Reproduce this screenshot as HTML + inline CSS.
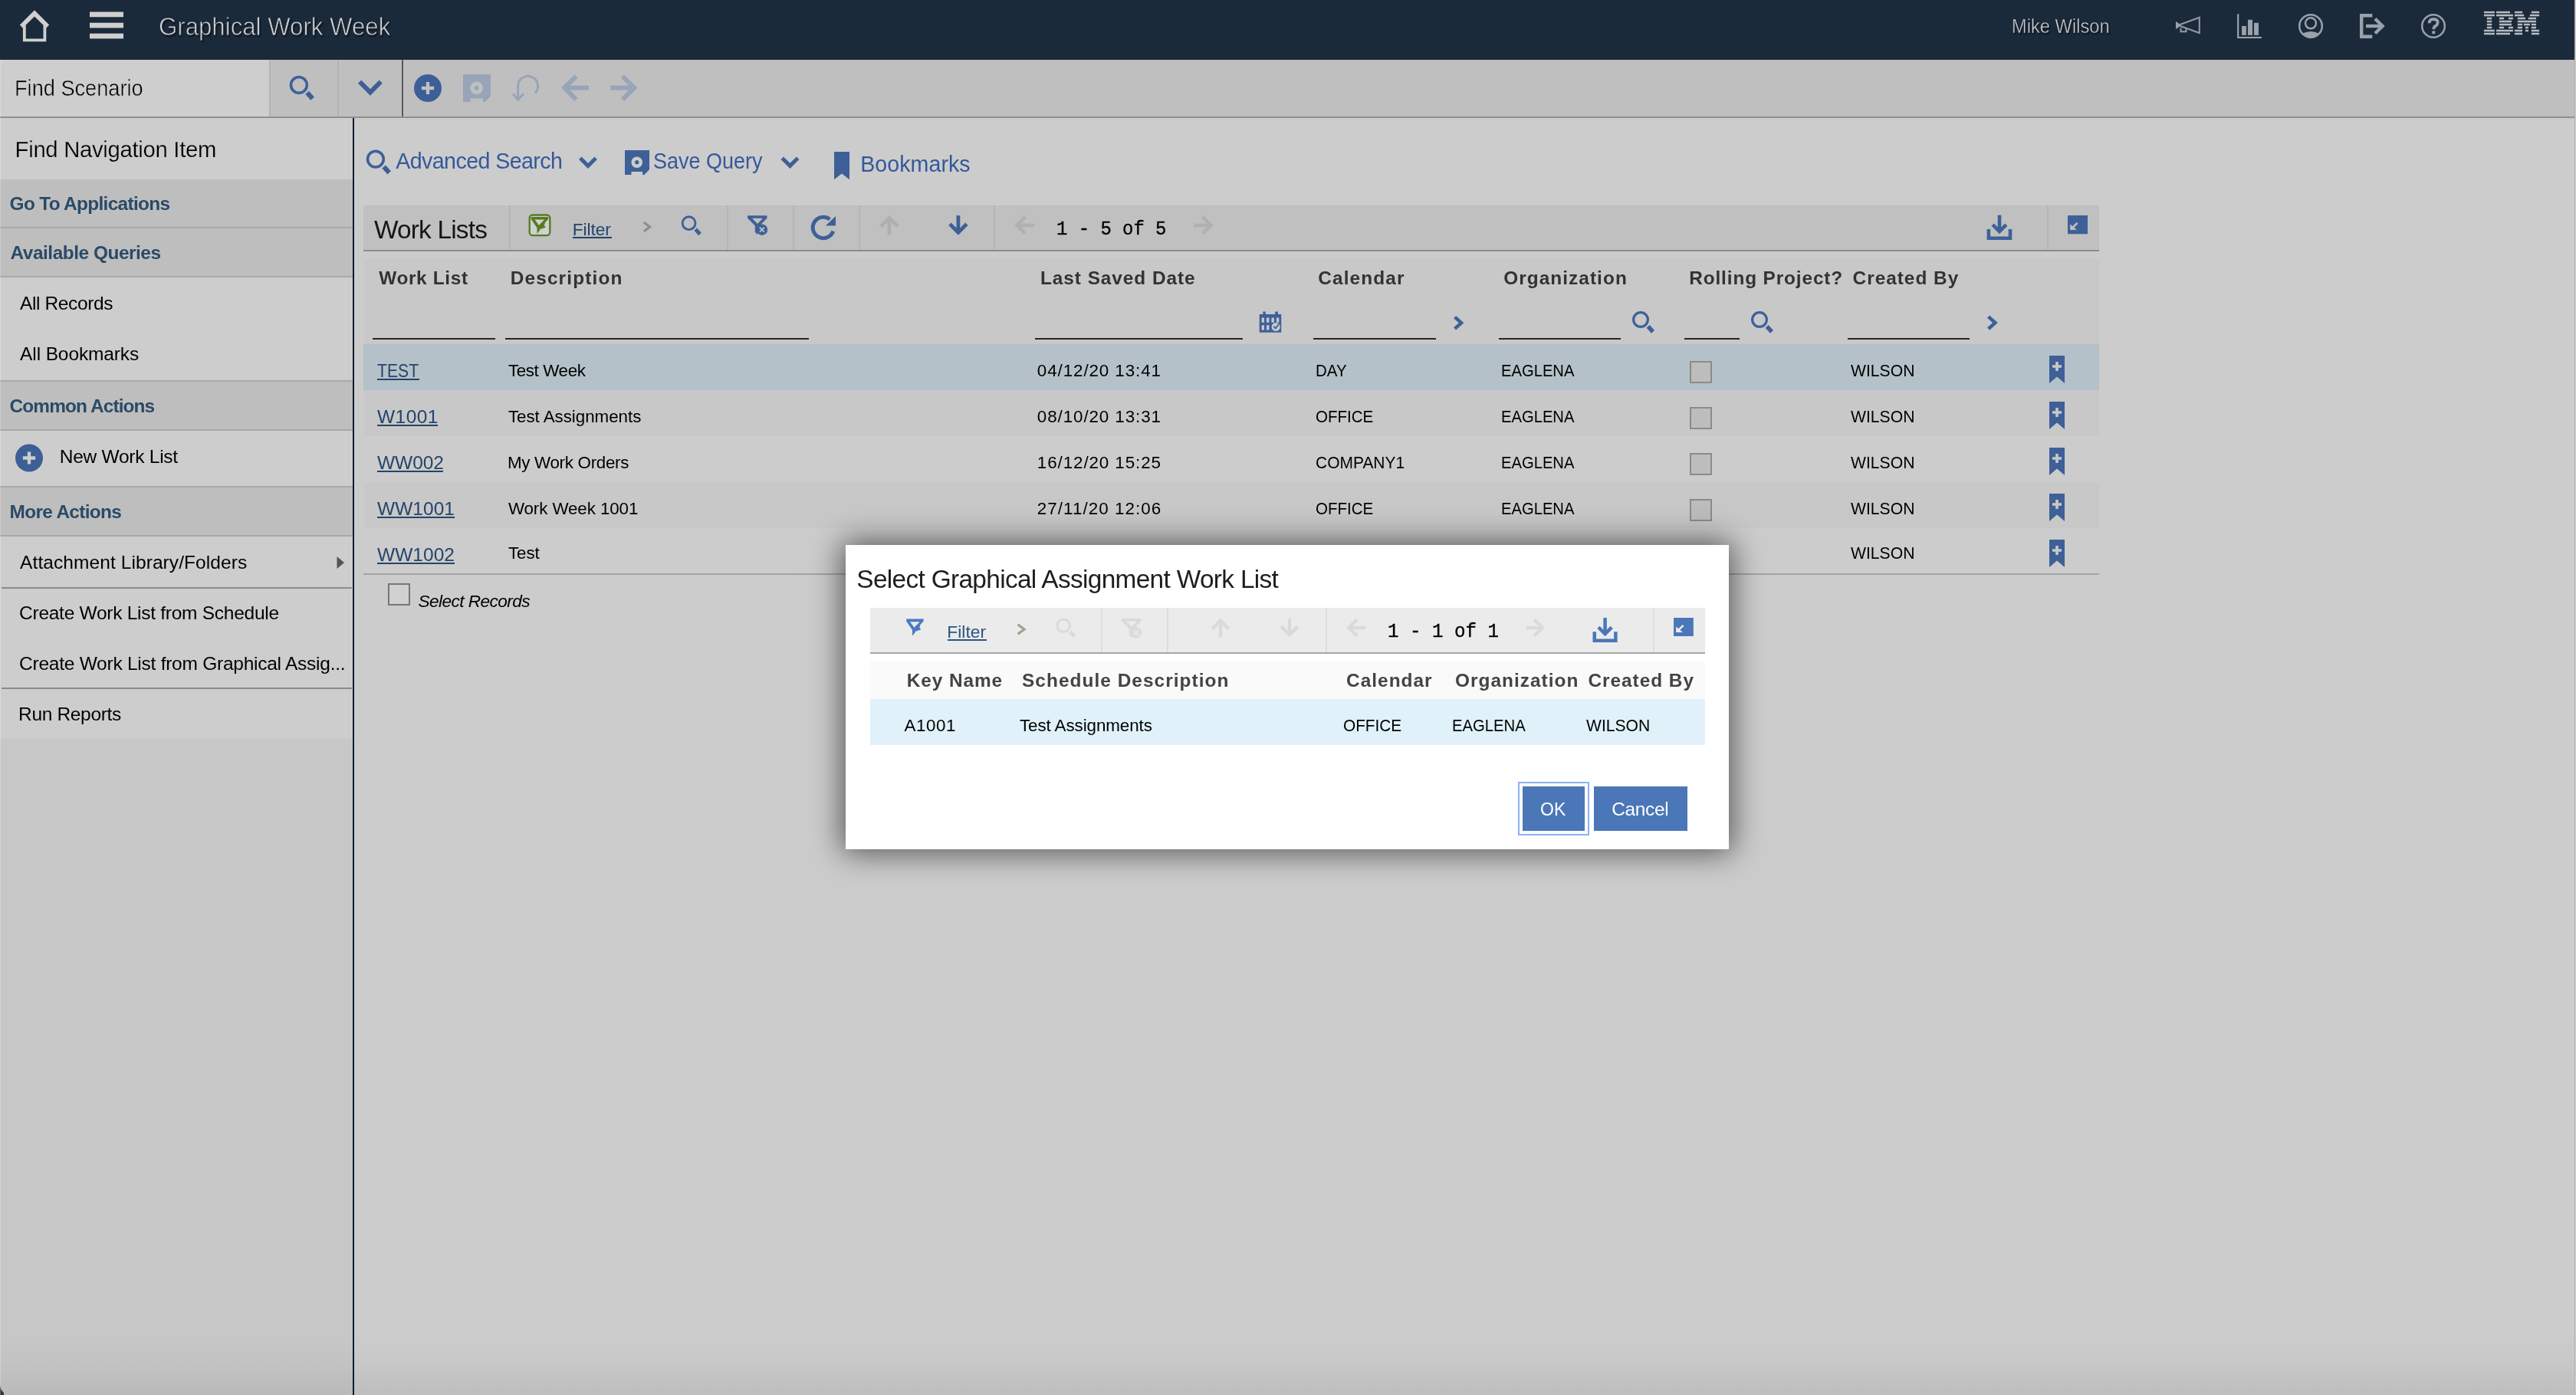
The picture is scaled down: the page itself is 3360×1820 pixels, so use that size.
<!DOCTYPE html>
<html lang="en">
<head>
<meta charset="utf-8">
<title>Graphical Work Week</title>
<style>
html,body{margin:0;padding:0;}
body{width:3360px;height:1820px;overflow:hidden;background:#cccccc;position:relative;font-family:"Liberation Sans",sans-serif;}
.r{position:absolute;}
.tl{position:absolute;left:0;top:0;width:3360px;height:1820px;will-change:transform;}
.t{position:absolute;white-space:nowrap;}
.dz{z-index:20;}
.dz2{z-index:25;}
svg{position:absolute;overflow:visible;}
.i{z-index:12;}
.di{z-index:28;}
</style>
</head>
<body>
<div class="r" style="left:0px;top:0px;width:3360px;height:78px;background:#1b2a3b;"></div>
<div class="r" style="left:0px;top:78px;width:3360px;height:74px;background:#bfbfbf;"></div>
<div class="r" style="left:0px;top:152px;width:3360px;height:2px;background:#8f8f8f;"></div>
<div class="r" style="left:0px;top:78px;width:351px;height:74px;background:#cecece;"></div>
<div class="r" style="left:351px;top:78px;width:2px;height:74px;background:#b3b3b3;"></div>
<div class="r" style="left:440px;top:78px;width:2px;height:74px;background:#b3b3b3;"></div>
<div class="r" style="left:524px;top:78px;width:2px;height:74px;background:#5a5a5a;"></div>
<div class="r" style="left:0px;top:154px;width:460px;height:810px;background:#cdcdcd;"></div>
<div class="r" style="left:0px;top:964px;width:460px;height:856px;background:#c7c7c7;"></div>
<div class="r" style="left:460px;top:154px;width:2px;height:1666px;background:#0f1e30;"></div>
<div class="r" style="left:0px;top:234px;width:460px;height:62px;background:#bebebe;"></div>
<div class="r" style="left:0px;top:298px;width:460px;height:62px;background:#bebebe;"></div>
<div class="r" style="left:0px;top:498px;width:460px;height:62px;background:#bebebe;"></div>
<div class="r" style="left:0px;top:636px;width:460px;height:62px;background:#bebebe;"></div>
<div class="r" style="left:0px;top:296px;width:460px;height:2px;background:#a9a9a9;"></div>
<div class="r" style="left:0px;top:360px;width:460px;height:2px;background:#a9a9a9;"></div>
<div class="r" style="left:0px;top:496px;width:460px;height:2px;background:#a9a9a9;"></div>
<div class="r" style="left:0px;top:560px;width:460px;height:2px;background:#a9a9a9;"></div>
<div class="r" style="left:0px;top:634px;width:460px;height:2px;background:#a9a9a9;"></div>
<div class="r" style="left:0px;top:698px;width:460px;height:2px;background:#a9a9a9;"></div>
<div class="r" style="left:2px;top:766px;width:457px;height:2px;background:#8c8c8c;"></div>
<div class="r" style="left:2px;top:897px;width:457px;height:2px;background:#8c8c8c;"></div>
<div class="r" style="left:474px;top:268px;width:2264px;height:58px;background:#c0c0c0;"></div>
<div class="r" style="left:474px;top:326px;width:2264px;height:2px;background:#8c8c8c;"></div>
<div class="r" style="left:664px;top:268px;width:2px;height:58px;background:#b5b5b5;"></div>
<div class="r" style="left:948px;top:268px;width:2px;height:58px;background:#b5b5b5;"></div>
<div class="r" style="left:1034px;top:268px;width:2px;height:58px;background:#b5b5b5;"></div>
<div class="r" style="left:1120px;top:268px;width:2px;height:58px;background:#b5b5b5;"></div>
<div class="r" style="left:1296px;top:268px;width:2px;height:58px;background:#b5b5b5;"></div>
<div class="r" style="left:2670px;top:268px;width:2px;height:58px;background:#b5b5b5;"></div>
<div class="r" style="left:474px;top:337px;width:2264px;height:112px;background:#c8c8c8;"></div>
<div class="r" style="left:486px;top:441px;width:160px;height:2px;background:#262626;"></div>
<div class="r" style="left:659px;top:441px;width:396px;height:2px;background:#262626;"></div>
<div class="r" style="left:1350px;top:441px;width:271px;height:2px;background:#262626;"></div>
<div class="r" style="left:1713px;top:441px;width:160px;height:2px;background:#262626;"></div>
<div class="r" style="left:1955px;top:441px;width:159px;height:2px;background:#262626;"></div>
<div class="r" style="left:2197px;top:441px;width:72px;height:2px;background:#262626;"></div>
<div class="r" style="left:2410px;top:441px;width:159px;height:2px;background:#262626;"></div>
<div class="r" style="left:474px;top:449px;width:2264px;height:60px;background:#b4c1c8;"></div>
<div class="r" style="left:474px;top:509px;width:2264px;height:60px;background:#c8c8c8;"></div>
<div class="r" style="left:474px;top:629px;width:2264px;height:60px;background:#c8c8c8;"></div>
<div class="r" style="left:474px;top:748px;width:2264px;height:2px;background:#a3a3a3;"></div>
<div class="r" style="left:2204px;top:471px;width:29px;height:29px;background:#bdbdbd;box-sizing:border-box;border:2px solid #8b8b8b;"></div>
<div class="r" style="left:2204px;top:531px;width:29px;height:29px;background:#bdbdbd;box-sizing:border-box;border:2px solid #8b8b8b;"></div>
<div class="r" style="left:2204px;top:591px;width:29px;height:29px;background:#bdbdbd;box-sizing:border-box;border:2px solid #8b8b8b;"></div>
<div class="r" style="left:2204px;top:651px;width:29px;height:29px;background:#bdbdbd;box-sizing:border-box;border:2px solid #8b8b8b;"></div>
<div class="r" style="left:506px;top:761px;width:29px;height:29px;background:#d1d1d1;box-sizing:border-box;border:2px solid #767676;"></div>
<div class="r dz" style="left:1103px;top:711px;width:1152px;height:397px;background:#ffffff;box-shadow:0 0 38px 4px rgba(0,0,0,.6);"></div>
<div class="r dz2" style="left:1135px;top:793px;width:1089px;height:58px;background:#ebebeb;"></div>
<div class="r dz2" style="left:1135px;top:851px;width:1089px;height:2px;background:#a6a6a6;"></div>
<div class="r dz2" style="left:1436px;top:793px;width:2px;height:58px;background:#dddddd;"></div>
<div class="r dz2" style="left:1522px;top:793px;width:2px;height:58px;background:#dddddd;"></div>
<div class="r dz2" style="left:1728.5px;top:793px;width:2.0px;height:58px;background:#dddddd;"></div>
<div class="r dz2" style="left:2156px;top:793px;width:2px;height:58px;background:#dddddd;"></div>
<div class="r dz2" style="left:1135px;top:862px;width:1089px;height:50px;background:#fafafa;"></div>
<div class="r dz2" style="left:1135px;top:912px;width:1089px;height:60px;background:#e0f1f9;"></div>
<div class="r dz2" style="left:1980px;top:1020px;width:93px;height:70px;background:transparent;box-sizing:border-box;border:2px solid #8db0f5;"></div>
<div class="r dz2" style="left:1986px;top:1026px;width:81px;height:58px;background:#4b77b9;"></div>
<div class="r dz2" style="left:2079px;top:1026px;width:122px;height:58px;background:#4b77b9;"></div>
<div class="r" style="left:0px;top:1740px;width:3358px;height:80px;background:transparent;background:linear-gradient(to bottom,rgba(0,0,0,0) 0%,rgba(0,0,0,.025) 50%,rgba(0,0,0,.07) 100%);"></div>
<div class="r" style="left:3358px;top:0px;width:2px;height:1820px;background:#cfcfcf;border-left:1px solid #b2b2b2;box-sizing:border-box;"></div>
<div class="r" style="left:0px;top:1808px;width:5px;height:12px;background:transparent;background:radial-gradient(circle at 13px -1px,rgba(0,0,0,0) 12.2px,#3a3442 13.4px);"></div>
<div class="r" style="left:0px;top:78px;width:1px;height:1742px;background:rgba(255,255,255,.22);"></div>
<div class="tl" style="z-index:10">
<div class="t" style="left:206.7px;top:18px;font-size:33.8px;line-height:33.8px;color:#d6d6d6;transform:scaleX(0.9230);transform-origin:0 0;text-shadow:1.5px 2px 2px rgba(0,0,0,.55);-webkit-text-stroke:0.9px #1b2a3b;">Graphical Work Week</div>
<div class="t" style="left:2624.4px;top:22px;font-size:25.4px;line-height:25.4px;color:#d6d6d6;transform:scaleX(0.9321);transform-origin:0 0;text-shadow:1.5px 2px 2px rgba(0,0,0,.55);-webkit-text-stroke:0.6px #1b2a3b;">Mike Wilson</div>
<div class="t" style="left:19.2px;top:100px;font-size:29.3px;line-height:29.3px;color:#000;transform:scaleX(0.9275);transform-origin:0 0;-webkit-text-stroke:0.5px #cecece;">Find Scenario</div>
<div class="t" style="left:19.6px;top:180px;font-size:29.3px;line-height:29.3px;color:#000;letter-spacing:-0.31px;-webkit-text-stroke:0.25px #cecece;">Find Navigation Item</div>
<div class="t" style="left:12.6px;top:254px;font-size:24.4px;line-height:24.4px;color:#2a4a67;font-weight:bold;letter-spacing:-0.67px;">Go To Applications</div>
<div class="t" style="left:13.6px;top:318px;font-size:24.4px;line-height:24.4px;color:#2a4a67;font-weight:bold;letter-spacing:-0.46px;">Available Queries</div>
<div class="t" style="left:12.6px;top:518px;font-size:24.4px;line-height:24.4px;color:#2a4a67;font-weight:bold;letter-spacing:-0.88px;">Common Actions</div>
<div class="t" style="left:12.6px;top:656px;font-size:24.4px;line-height:24.4px;color:#2a4a67;font-weight:bold;letter-spacing:-0.67px;">More Actions</div>
<div class="t" style="left:26.1px;top:384px;font-size:24.5px;line-height:24.5px;color:#000;letter-spacing:-0.39px;">All Records</div>
<div class="t" style="left:26.1px;top:450px;font-size:24.5px;line-height:24.5px;color:#000;letter-spacing:-0.12px;">All Bookmarks</div>
<div class="t" style="left:26.1px;top:722px;font-size:24.5px;line-height:24.5px;color:#000;letter-spacing:0.08px;">Attachment Library/Folders</div>
<div class="t" style="left:25.1px;top:788px;font-size:24.5px;line-height:24.5px;color:#000;letter-spacing:-0.27px;">Create Work List from Schedule</div>
<div class="t" style="left:25.1px;top:854px;font-size:24.5px;line-height:24.5px;color:#000;letter-spacing:-0.25px;">Create Work List from Graphical Assig...</div>
<div class="t" style="left:24.1px;top:920px;font-size:24.5px;line-height:24.5px;color:#000;letter-spacing:-0.34px;">Run Reports</div>
<div class="t" style="left:77.7px;top:584px;font-size:24.5px;line-height:24.5px;color:#000;letter-spacing:-0.25px;">New Work List</div>
<div class="t" style="left:516.2px;top:196px;font-size:28.6px;line-height:28.6px;color:#34599a;letter-spacing:-0.57px;">Advanced Search</div>
<div class="t" style="left:852.3px;top:196px;font-size:28.6px;line-height:28.6px;color:#34599a;transform:scaleX(0.9440);transform-origin:0 0;">Save Query</div>
<div class="t" style="left:1122.2px;top:200px;font-size:28.6px;line-height:28.6px;color:#34599a;letter-spacing:0.05px;">Bookmarks</div>
<div class="t" style="left:487.9px;top:283px;font-size:33.4px;line-height:33.4px;color:#161616;letter-spacing:-0.80px;">Work Lists</div>
<div class="t" style="left:746.8px;top:288px;font-size:22.8px;line-height:22.8px;color:#25446a;letter-spacing:-0.10px;">Filter</div><div class="r" style="left:747.4px;top:309px;width:50.5px;height:2px;background:#25446a"></div>
<div class="t" style="left:1377.8px;top:286px;font-size:26px;line-height:26px;color:#000;transform:scaleX(0.9195);transform-origin:0 0;font-family:'Liberation Mono';-webkit-text-stroke:0.35px #000;">1 - 5 of 5</div>
<div class="t" style="left:494.2px;top:351px;font-size:24.4px;line-height:24.4px;color:#333;font-weight:bold;letter-spacing:0.65px;">Work List</div>
<div class="t" style="left:665.7px;top:351px;font-size:24.4px;line-height:24.4px;color:#333;font-weight:bold;letter-spacing:1.15px;">Description</div>
<div class="t" style="left:1357.0px;top:351px;font-size:24.4px;line-height:24.4px;color:#333;font-weight:bold;letter-spacing:0.94px;">Last Saved Date</div>
<div class="t" style="left:1719.2px;top:351px;font-size:24.4px;line-height:24.4px;color:#333;font-weight:bold;letter-spacing:1.14px;">Calendar</div>
<div class="t" style="left:1961.2px;top:351px;font-size:24.4px;line-height:24.4px;color:#333;font-weight:bold;letter-spacing:1.05px;">Organization</div>
<div class="t" style="left:2203.2px;top:351px;font-size:24.4px;line-height:24.4px;color:#333;font-weight:bold;letter-spacing:0.87px;">Rolling Project?</div>
<div class="t" style="left:2416.6px;top:351px;font-size:24.4px;line-height:24.4px;color:#333;font-weight:bold;letter-spacing:0.98px;">Created By</div>
<div class="t" style="left:492.0px;top:472px;font-size:24.5px;line-height:24.5px;color:#25446a;transform:scaleX(0.8651);transform-origin:0 0;">TEST</div><div class="r" style="left:491.6px;top:494px;width:55.5px;height:2px;background:#25446a"></div>
<div class="t" style="left:662.9px;top:473px;font-size:22.4px;line-height:22.4px;color:#000;letter-spacing:-0.38px;">Test Week</div>
<div class="t" style="left:1352.8px;top:473px;font-size:22.4px;line-height:22.4px;color:#000;letter-spacing:0.91px;">04/12/20 13:41</div>
<div class="t" style="left:1716.0px;top:473px;font-size:22.4px;line-height:22.4px;color:#000;transform:scaleX(0.9140);transform-origin:0 0;">DAY</div>
<div class="t" style="left:1958.1px;top:473px;font-size:22.4px;line-height:22.4px;color:#000;transform:scaleX(0.9019);transform-origin:0 0;">EAGLENA</div>
<div class="t" style="left:2413.6px;top:473px;font-size:22.4px;line-height:22.4px;color:#000;transform:scaleX(0.9448);transform-origin:0 0;">WILSON</div>
<div class="t" style="left:492.0px;top:532px;font-size:24.5px;line-height:24.5px;color:#25446a;letter-spacing:0.45px;">W1001</div><div class="r" style="left:491.6px;top:554px;width:79.8px;height:2px;background:#25446a"></div>
<div class="t" style="left:662.9px;top:533px;font-size:22.4px;line-height:22.4px;color:#000;letter-spacing:-0.05px;">Test Assignments</div>
<div class="t" style="left:1352.8px;top:533px;font-size:22.4px;line-height:22.4px;color:#000;letter-spacing:0.91px;">08/10/20 13:31</div>
<div class="t" style="left:1716.0px;top:533px;font-size:22.4px;line-height:22.4px;color:#000;transform:scaleX(0.9173);transform-origin:0 0;">OFFICE</div>
<div class="t" style="left:1958.1px;top:533px;font-size:22.4px;line-height:22.4px;color:#000;transform:scaleX(0.9019);transform-origin:0 0;">EAGLENA</div>
<div class="t" style="left:2413.6px;top:533px;font-size:22.4px;line-height:22.4px;color:#000;transform:scaleX(0.9448);transform-origin:0 0;">WILSON</div>
<div class="t" style="left:492.0px;top:592px;font-size:24.5px;line-height:24.5px;color:#25446a;letter-spacing:-0.05px;">WW002</div><div class="r" style="left:491.6px;top:614px;width:86.8px;height:2px;background:#25446a"></div>
<div class="t" style="left:661.9px;top:593px;font-size:22.4px;line-height:22.4px;color:#000;letter-spacing:-0.31px;">My Work Orders</div>
<div class="t" style="left:1352.8px;top:593px;font-size:22.4px;line-height:22.4px;color:#000;letter-spacing:0.91px;">16/12/20 15:25</div>
<div class="t" style="left:1716.0px;top:593px;font-size:22.4px;line-height:22.4px;color:#000;transform:scaleX(0.9369);transform-origin:0 0;">COMPANY1</div>
<div class="t" style="left:1958.1px;top:593px;font-size:22.4px;line-height:22.4px;color:#000;transform:scaleX(0.9019);transform-origin:0 0;">EAGLENA</div>
<div class="t" style="left:2413.6px;top:593px;font-size:22.4px;line-height:22.4px;color:#000;transform:scaleX(0.9448);transform-origin:0 0;">WILSON</div>
<div class="t" style="left:492.0px;top:652px;font-size:24.5px;line-height:24.5px;color:#25446a;letter-spacing:0.04px;">WW1001</div><div class="r" style="left:491.6px;top:674px;width:101.2px;height:2px;background:#25446a"></div>
<div class="t" style="left:662.9px;top:653px;font-size:22.4px;line-height:22.4px;color:#000;letter-spacing:-0.11px;">Work Week 1001</div>
<div class="t" style="left:1352.8px;top:653px;font-size:22.4px;line-height:22.4px;color:#000;letter-spacing:1.06px;">27/11/20 12:06</div>
<div class="t" style="left:1716.0px;top:653px;font-size:22.4px;line-height:22.4px;color:#000;transform:scaleX(0.9173);transform-origin:0 0;">OFFICE</div>
<div class="t" style="left:1958.1px;top:653px;font-size:22.4px;line-height:22.4px;color:#000;transform:scaleX(0.9019);transform-origin:0 0;">EAGLENA</div>
<div class="t" style="left:2413.6px;top:653px;font-size:22.4px;line-height:22.4px;color:#000;transform:scaleX(0.9448);transform-origin:0 0;">WILSON</div>
<div class="t" style="left:492.0px;top:712px;font-size:24.5px;line-height:24.5px;color:#25446a;letter-spacing:0.04px;">WW1002</div><div class="r" style="left:491.6px;top:734px;width:101.2px;height:2px;background:#25446a"></div>
<div class="t" style="left:662.9px;top:711px;font-size:22.4px;line-height:22.4px;color:#000;letter-spacing:-0.07px;">Test</div>
<div class="t" style="left:2413.6px;top:711px;font-size:22.4px;line-height:22.4px;color:#000;transform:scaleX(0.9448);transform-origin:0 0;">WILSON</div>
<div class="t" style="left:545.5px;top:773px;font-size:22.7px;line-height:22.7px;color:#000;font-style:italic;letter-spacing:-0.60px;">Select Records</div>
</div>
<div class="tl" style="z-index:30">
<div class="t d" style="left:1117.3px;top:739px;font-size:33.4px;line-height:33.4px;color:#1e1e1e;letter-spacing:-0.67px;">Select Graphical Assignment Work List</div>
<div class="t d" style="left:1235.2px;top:813px;font-size:22.8px;line-height:22.8px;color:#2c5580;letter-spacing:0.06px;">Filter</div><div class="r" style="left:1235.8px;top:834px;width:51.3px;height:2px;background:#2c5580"></div>
<div class="t d" style="left:1810.3px;top:811px;font-size:26px;line-height:26px;color:#000;transform:scaleX(0.9286);transform-origin:0 0;font-family:'Liberation Mono';-webkit-text-stroke:0.35px #000;">1 - 1 of 1</div>
<div class="t d" style="left:1182.8px;top:876px;font-size:24.4px;line-height:24.4px;color:#444;font-weight:bold;letter-spacing:0.91px;">Key Name</div>
<div class="t d" style="left:1333.0px;top:876px;font-size:24.4px;line-height:24.4px;color:#444;font-weight:bold;letter-spacing:1.05px;">Schedule Description</div>
<div class="t d" style="left:1756.0px;top:876px;font-size:24.4px;line-height:24.4px;color:#444;font-weight:bold;letter-spacing:1.03px;">Calendar</div>
<div class="t d" style="left:1898.0px;top:876px;font-size:24.4px;line-height:24.4px;color:#444;font-weight:bold;letter-spacing:1.02px;">Organization</div>
<div class="t d" style="left:2071.5px;top:876px;font-size:24.4px;line-height:24.4px;color:#444;font-weight:bold;letter-spacing:0.97px;">Created By</div>
<div class="t d" style="left:1179.5px;top:936px;font-size:22.4px;line-height:22.4px;color:#000;letter-spacing:0.57px;">A1001</div>
<div class="t d" style="left:1330.0px;top:936px;font-size:22.4px;line-height:22.4px;color:#000;letter-spacing:-0.09px;">Test Assignments</div>
<div class="t d" style="left:1751.6px;top:936px;font-size:22.4px;line-height:22.4px;color:#000;transform:scaleX(0.9284);transform-origin:0 0;">OFFICE</div>
<div class="t d" style="left:1894.3px;top:936px;font-size:22.4px;line-height:22.4px;color:#000;transform:scaleX(0.9048);transform-origin:0 0;">EAGLENA</div>
<div class="t d" style="left:2069.0px;top:936px;font-size:22.4px;line-height:22.4px;color:#000;transform:scaleX(0.9420);transform-origin:0 0;">WILSON</div>
<div class="t d" style="left:2008.6px;top:1044px;font-size:24.4px;line-height:24.4px;color:#fff;transform:scaleX(0.9441);transform-origin:0 0;">OK</div>
<div class="t d" style="left:2102.2px;top:1044px;font-size:24.4px;line-height:24.4px;color:#fff;letter-spacing:-0.30px;">Cancel</div>
</div>
<svg class="i" width="3360" height="1820" viewBox="0 0 3360 1820" style="left:0;top:0"><path d="M45 13.3L64.2 32.6L60.3 36.6L45 21.4L29.7 36.6L25.8 32.6Z" fill="#cfcfcf"/><path d="M31.8 33V52.3H58.4V33" fill="none" stroke="#cfcfcf" stroke-width="3.8"/>
<rect x="117" y="15.5" width="44" height="6.7" fill="#cfcfcf"/>
<rect x="117" y="29.7" width="44" height="6.7" fill="#cfcfcf"/>
<rect x="117" y="43.7" width="44" height="6.7" fill="#cfcfcf"/>
<g fill="none" stroke="#939aa3" stroke-width="2"><path d="M2841 33L2868.8 22.8V43L2841 33Z"/><path d="M2844.5 36.5V41.2H2851.5V37.5"/></g><path d="M2838 28V38L2842.5 35V31Z" fill="#9aa1a9"/>
<path d="M2919.2 18.2V49H2950" fill="none" stroke="#9aa1a9" stroke-width="2.2"/><rect x="2924" y="33.9" width="5.9" height="12" fill="#9aa1a9"/><rect x="2932" y="25.8" width="6" height="20.1" fill="#9aa1a9"/><rect x="2940" y="29.8" width="6" height="16.1" fill="#9aa1a9"/>
<g fill="none" stroke="#9aa1a9" stroke-width="2.5"><circle cx="3014" cy="34" r="14.8"/><circle cx="3014" cy="30.3" r="7"/></g><path d="M3003.5 43.5Q3014 38.5 3024.5 43.5Q3020 49.6 3014 49.6Q3008 49.6 3003.5 43.5Z" fill="#9aa1a9"/>
<g fill="none" stroke="#9aa1a9" stroke-width="4.4"><path d="M3094.3 20.2H3080.2V47.8H3094.3"/><path d="M3086 34H3107"/><path d="M3098 24.5L3107.6 34L3098 43.5"/></g>
<circle cx="3174" cy="34" r="14.8" fill="none" stroke="#9aa1a9" stroke-width="2.5"/><path d="M3168.6 30.2Q3168.8 25 3174.2 25Q3179.6 25 3179.6 29.6Q3179.6 32.4 3176.6 34Q3174.3 35.3 3174.3 38.3" fill="none" stroke="#9aa1a9" stroke-width="3.8"/><rect x="3172.3" y="40.4" width="4" height="3.8" fill="#9aa1a9"/>
<path d="M3239.9 14.8H3253.9V17.2H3239.9ZM3256 14.8H3274V17.2H3256ZM3279.9 14.8H3290.2V17.2H3279.9ZM3301.8 14.8H3312.1V17.2H3301.8ZM3239.9 18.8H3253.9V21.2H3239.9ZM3256 18.8H3277.9V21.2H3256ZM3279.9 18.8H3292.1V21.2H3279.9ZM3299.9 18.8H3312.1V21.2H3299.9ZM3243.8 22.8H3250.2V25.2H3243.8ZM3259.9 22.8H3266.1V25.2H3259.9ZM3271.9 22.8H3277.9V25.2H3271.9ZM3283.8 22.8H3294V25.2H3283.8ZM3297.7 22.8H3308V25.2H3297.7ZM3243.8 26.8H3250.2V29.2H3243.8ZM3259.9 26.8H3276V29.2H3259.9ZM3283.8 26.8H3308V29.2H3283.8ZM3243.8 30.8H3250.2V33.2H3243.8ZM3259.9 30.8H3276V33.2H3259.9ZM3283.8 30.8H3290V33.2H3283.8ZM3291.9 30.8H3299.9V33.2H3291.9ZM3301.8 30.8H3308V33.2H3301.8ZM3243.8 34.8H3250.2V37.2H3243.8ZM3259.9 34.8H3266.1V37.2H3259.9ZM3271.9 34.8H3277.9V37.2H3271.9ZM3283.8 34.8H3290V37.2H3283.8ZM3293.9 34.8H3297.9V37.2H3293.9ZM3301.8 34.8H3308V37.2H3301.8ZM3239.9 38.8H3253.9V41.2H3239.9ZM3256 38.8H3277.9V41.2H3256ZM3279.9 38.8H3290V41.2H3279.9ZM3293.9 38.8H3297.9V41.2H3293.9ZM3301.8 38.8H3312.1V41.2H3301.8ZM3239.9 42.8H3253.9V45.2H3239.9ZM3256 42.8H3274V45.2H3256ZM3279.9 42.8H3290V45.2H3279.9ZM3301.8 42.8H3312.1V45.2H3301.8Z" fill="#b6babf"/>
<g transform="translate(377.7,98.7) scale(1.0000)" fill="none" stroke="#3e6098"><circle cx="12.2" cy="12.2" r="10.4" stroke-width="3.6"/><path d="M22.9 22.1L30 29.9" stroke-width="6.2"/></g>
<path d="M469.12 106.62L482.90 120.40L496.68 106.62" fill="none" stroke="#3e6098" stroke-width="6"/>
<circle cx="558" cy="115" r="18" fill="#3d5f97"/><path d="M549.9 115H566.1M558 106.9V123.1" stroke="#c0c0c0" stroke-width="4.30" fill="none"/>
<g transform="translate(604,97) scale(1.0000)"><path d="M0 0H36V28.5L28.5 36H26V31.5H9.5V36H0Z" fill="#98a5b8"/><circle cx="17.7" cy="17.7" r="8.2" fill="#c0c0c0"/><circle cx="17.7" cy="17.7" r="3" fill="#98a5b8"/></g>
<g fill="none" stroke="#98a5b8" stroke-width="3"><path d="M697.8 121.5A13 13 0 1 0 675.6 112.3V129"/><path d="M669 122.3L675.6 130L683 122.3"/></g>
<g fill="none" stroke="#98a5b8" stroke-width="6"><path d="M736 114.6H768"/><path d="M751.5 99.3L736.2 114.6L751.5 129.9"/></g>
<g fill="none" stroke="#98a5b8" stroke-width="6"><path d="M796.3 114.6H827.5"/><path d="M812.0 99.3L827.3 114.6L812.0 129.9"/></g>
<circle cx="38" cy="597.5" r="18" fill="#3d5f97"/><path d="M29.9 597.5H46.1M38 589.4V605.6" stroke="#cecece" stroke-width="4.30" fill="none"/>
<path d="M439.5 726L449 734L439.5 742Z" fill="#555"/>
<g transform="translate(477.7,195.4) scale(1.0000)" fill="none" stroke="#3e6098"><circle cx="12.2" cy="12.2" r="10.4" stroke-width="3.6"/><path d="M22.9 22.1L30 29.9" stroke-width="6.2"/></g>
<path d="M756.77 206.17L767.00 216.40L777.23 206.17" fill="none" stroke="#3e6098" stroke-width="5"/>
<g transform="translate(815,196) scale(0.8889)"><path d="M0 0H36V28.5L28.5 36H26V31.5H9.5V36H0Z" fill="#3e6098"/><circle cx="17.7" cy="17.7" r="8.2" fill="#cccccc"/><circle cx="17.7" cy="17.7" r="3" fill="#3e6098"/></g>
<path d="M1020.27 206.17L1030.45 216.35L1040.63 206.17" fill="none" stroke="#3e6098" stroke-width="5"/>
<path d="M1088 198H1108V234.3L1098 226.5L1088 234.3Z" fill="#3e6098"/>
<rect x="690.7" y="280.5" width="26.6" height="26.6" rx="4" fill="#d0d0d0" stroke="#567b20" stroke-width="2.3"/>
<g transform="translate(692.7,282.9)"><path d="M0 0H22.4V3L11.6 14.3V17.3L7.8 22V14.3L0 3Z" fill="#567b20"/><path d="M4.8 3.7H17.4L10.3 11.2Z" fill="#d0d0d0"/><path d="M11.8 9L18.4 8L17 11L19.2 13.6L11.8 16.3Z" fill="#567b20"/></g>
<path d="M839.73 290.03L847.57 296.05L839.73 302.07" fill="none" stroke="#8e8e84" stroke-width="3.2"/>
<g transform="translate(888.7,281.3) scale(0.8092)" fill="none" stroke="#3e6098"><circle cx="12.2" cy="12.2" r="10.4" stroke-width="3.6"/><path d="M22.9 22.1L30 29.9" stroke-width="6.2"/></g>
<g transform="translate(975,281.2)"><path d="M0 0H25.5V3.3L15.5 13.5H13V25L9.8 21.5V13.3L0 3.3Z" fill="#3e6098"/><path d="M6 3.6H20L13 10.8Z" fill="#c0c0c0"/><circle cx="18.9" cy="18.5" r="7.2" fill="#3e6098"/><path d="M15.9 15.5L21.9 21.5M21.9 15.5L15.9 21.5" stroke="#c0c0c0" stroke-width="1.9" fill="none"/></g>
<path d="M1086.77 301.59A13.7 13.7 0 1 1 1082.33 286.10" fill="none" stroke="#3e6098" stroke-width="5"/><path d="M1090.0 282.09999999999997V294.59999999999997H1076.9Z" fill="#3e6098"/>
<g transform="translate(1159.9,293.9) rotate(0)" fill="none" stroke="#aeaeae" stroke-width="4.6"><path d="M0 -9.05V12.80"/><path d="M-11.00 1.45L0 -9.55L11.00 1.45"/></g>
<g transform="translate(1249.9,293.9) rotate(180)" fill="none" stroke="#3d5f97" stroke-width="4.8"><path d="M0 -8.91V12.80"/><path d="M-11.00 1.59L0 -9.41L11.00 1.59"/></g>
<g transform="translate(1336,293.9) rotate(270)" fill="none" stroke="#b0b0b0" stroke-width="4.6"><path d="M0 -9.05V12.80"/><path d="M-10.80 1.25L0 -9.55L10.80 1.25"/></g>
<g transform="translate(1570,293.9) rotate(90)" fill="none" stroke="#b0b0b0" stroke-width="4.6"><path d="M0 -9.05V12.80"/><path d="M-10.80 1.25L0 -9.55L10.80 1.25"/></g>
<g transform="translate(2591.6,280.6) scale(1.0000)" fill="none" stroke="#3e6098" stroke-width="4.6"><path d="M2.3 18.5V30.2H30.4V18.5"/><path d="M16.4 0V21"/><path d="M7.6 12.6L16.4 21.4L25.2 12.6"/></g>
<rect x="2697" y="281" width="26" height="24.3" fill="#3e6098"/><path d="M2700.2 292.6V300.1H2708.9Z" fill="#c0c0c0"/><path d="M2703.3 297.2L2709.6 290.8" fill="none" stroke="#c0c0c0" stroke-width="2.6"/>
<path d="M1897.59 413.59L1906.13 421.25L1897.59 428.91" fill="none" stroke="#3e6098" stroke-width="4.5"/>
<path d="M2593.59 413.09L2602.44 421.05L2593.59 429.01" fill="none" stroke="#3e6098" stroke-width="4.5"/>
<g transform="translate(2129,406) scale(0.9015)" fill="none" stroke="#3e6098"><circle cx="12.2" cy="12.2" r="10.4" stroke-width="3.6"/><path d="M22.9 22.1L30 29.9" stroke-width="6.2"/></g>
<g transform="translate(2284,406) scale(0.9015)" fill="none" stroke="#3e6098"><circle cx="12.2" cy="12.2" r="10.4" stroke-width="3.6"/><path d="M22.9 22.1L30 29.9" stroke-width="6.2"/></g>
<path d="M2673 464H2693V500L2683 491.5L2673 500Z" fill="#3f6096"/><path d="M2677 478H2689M2683 472V484" stroke="#c8c8c8" stroke-width="3.6" fill="none"/>
<path d="M2673 524H2693V560L2683 551.5L2673 560Z" fill="#3f6096"/><path d="M2677 538H2689M2683 532V544" stroke="#c8c8c8" stroke-width="3.6" fill="none"/>
<path d="M2673 584H2693V620L2683 611.5L2673 620Z" fill="#3f6096"/><path d="M2677 598H2689M2683 592V604" stroke="#c8c8c8" stroke-width="3.6" fill="none"/>
<path d="M2673 644H2693V680L2683 671.5L2673 680Z" fill="#3f6096"/><path d="M2677 658H2689M2683 652V664" stroke="#c8c8c8" stroke-width="3.6" fill="none"/>
<path d="M2673 704H2693V740L2683 731.5L2673 740Z" fill="#3f6096"/><path d="M2677 718H2689M2683 712V724" stroke="#c8c8c8" stroke-width="3.6" fill="none"/>
<g transform="translate(1642.7,406.5)"><path d="M0 3.4H4.7V0H8.1V3.4H20.5V0H24.2V3.4H28.5V27.2H0Z" fill="#3e6098"/><path d="M2.9 8H6.3V14.3H2.9ZM9.3 8H12.700000000000001V14.3H9.3ZM15.8 8H19.2V14.3H15.8ZM22.2 8H25.599999999999998V14.3H22.2ZM2.9 17.7H6.3V24H2.9ZM9.3 17.7H12.700000000000001V24H9.3Z" fill="#c8c8c8"/><circle cx="21.5" cy="20" r="5.6" fill="#c8c8c8"/><path d="M18.6 19.3L21 21.8L25.3 16.5" fill="none" stroke="#3e6098" stroke-width="1.8"/></g></svg>
<svg class="di" width="3360" height="1820" viewBox="0 0 3360 1820" style="left:0;top:0"><g transform="translate(1182.2,807.6)"><path d="M0 0H22.4V3L11.6 14.3V17.3L7.8 22V14.3L0 3Z" fill="#4e79c0"/><path d="M4.8 3.7H17.4L10.3 11.2Z" fill="#ebebeb"/><path d="M11.8 9L18.4 8L17 11L19.2 13.6L11.8 16.3Z" fill="#4e79c0"/></g>
<path d="M1327.56 814.76L1336.06 821.00L1327.56 827.24" fill="none" stroke="#a09e90" stroke-width="3"/>
<g transform="translate(1377.5,806.6) scale(0.7938)" fill="none" stroke="#dadada"><circle cx="12.2" cy="12.2" r="10.4" stroke-width="3.6"/><path d="M22.9 22.1L30 29.9" stroke-width="6.2"/></g>
<g transform="translate(1463,807)"><path d="M0 0H25.5V3.3L15.5 13.5H13V25L9.8 21.5V13.3L0 3.3Z" fill="#dadada"/><path d="M6 3.6H20L13 10.8Z" fill="#ebebeb"/><circle cx="18.9" cy="18.5" r="7.2" fill="#dadada"/><path d="M15.9 15.5L21.9 21.5M21.9 15.5L15.9 21.5" stroke="#ebebeb" stroke-width="1.9" fill="none"/></g>
<g transform="translate(1592,819) rotate(0)" fill="none" stroke="#dadada" stroke-width="4.4"><path d="M0 -8.64V12.25"/><path d="M-10.80 1.66L0 -9.14L10.80 1.66"/></g>
<g transform="translate(1682,819) rotate(180)" fill="none" stroke="#dadada" stroke-width="4.4"><path d="M0 -8.64V12.25"/><path d="M-10.80 1.66L0 -9.14L10.80 1.66"/></g>
<g transform="translate(1768.5,819) rotate(270)" fill="none" stroke="#dadada" stroke-width="4.4"><path d="M0 -8.64V12.25"/><path d="M-10.80 1.66L0 -9.14L10.80 1.66"/></g>
<g transform="translate(2002.7,819) rotate(90)" fill="none" stroke="#dadada" stroke-width="4.4"><path d="M0 -8.64V12.25"/><path d="M-10.80 1.66L0 -9.14L10.80 1.66"/></g>
<g transform="translate(2077.5,806) scale(0.9816)" fill="none" stroke="#4b77b9" stroke-width="4.6"><path d="M2.3 18.5V30.2H30.4V18.5"/><path d="M16.4 0V21"/><path d="M7.6 12.6L16.4 21.4L25.2 12.6"/></g>
<rect x="2183" y="806" width="25.8" height="24" fill="#4b77b9"/><path d="M2186.2 817.6V825.1H2194.9Z" fill="#ebebeb"/><path d="M2189.3 822.2L2195.6 815.8" fill="none" stroke="#ebebeb" stroke-width="2.6"/></svg>
</body>
</html>
